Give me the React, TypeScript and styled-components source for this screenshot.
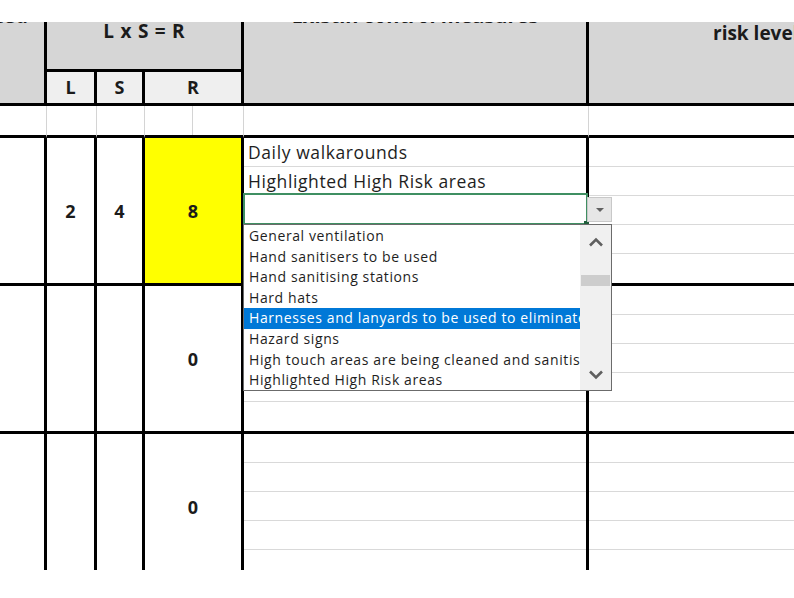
import React from "react";
import styled, { createGlobalStyle } from "styled-components";

const GlobalStyle = createGlobalStyle`
  html, body {
    margin: 0;
    padding: 0;
    background: #ffffff;
    overflow: hidden;
  }
  body {
    width: 794px;
    height: 598px;
    font-family: "Open Sans", "Noto Sans", sans-serif;
  }
`;

const Page = styled.div`
  width: 794px;
  height: 598px;
  padding-top: 22px;
  box-sizing: border-box;
  background: #ffffff;
`;

const Sheet = styled.div`
  display: grid;
  grid-template-columns: 47px 50px 48px 99px 345px 205px;
  grid-template-rows: 50px 34px 32px 148px 148px 148px;
  height: 548px;
  overflow: hidden;
  color: #1b1b1b;
`;

const HeadCell = styled.div<{ $light?: boolean; $rows?: number; $cols?: number; $last?: boolean }>`
  grid-row: span ${({ $rows }) => $rows || 1};
  grid-column: span ${({ $cols }) => $cols || 1};
  background: ${({ $light }) => ($light ? "#efefef" : "#d6d6d6")};
  border-right: ${({ $last }) => ($last ? "none" : "3px solid #000")};
  border-bottom: 3px solid #000;
  box-sizing: border-box;
  overflow: hidden;
  display: flex;
  justify-content: center;
  align-items: ${({ $light }) => ($light ? "center" : "flex-start")};
  font-size: ${({ $light }) => ($light ? 18 : 19)}px;
  line-height: 19px;
  font-weight: 700;
  white-space: nowrap;
`;

const Formula = styled(HeadCell)`
  word-spacing: 1.5px;
`;

/* header text whose upper part is hidden above the sheet's top edge */
const CutText = styled.span`
  margin-top: -16px;
  font-size: 20px;
  line-height: 20px;
`;

const SideHead = styled(HeadCell)`
  justify-content: flex-end;
  padding-right: 16px;
`;

const RiskHead = styled(HeadCell)`
  justify-content: flex-start;
  padding: 2px 0 0 124px;
`;

const EmptyCell = styled.div<{ $last?: boolean }>`
  border-right: ${({ $last }) => ($last ? "none" : "1px solid #d4d4d4")};
  border-bottom: 3px solid #000;
  box-sizing: border-box;
`;

const EmptySplit = styled(EmptyCell)`
  display: grid;
  grid-template-columns: 48px 1fr;
`;

const EmptyHalf = styled.div`
  border-right: 1px solid #d4d4d4;
`;

const MergedCell = styled.div<{ $fill?: string }>`
  background: ${({ $fill }) => $fill || "#ffffff"};
  border-right: 3px solid #000;
  border-bottom: 3px solid #000;
  box-sizing: border-box;
  display: flex;
  align-items: center;
  justify-content: center;
  font-size: 18px;
  line-height: 18px;
  font-weight: 700;
`;

const LinesCell = styled.div<{ $last?: boolean }>`
  position: relative;
  display: flex;
  flex-direction: column;
  border-right: ${({ $last }) => ($last ? "none" : "3px solid #000")};
  border-bottom: 3px solid #000;
  box-sizing: border-box;
`;

const Line = styled.div`
  height: 29px;
  flex: none;
  box-sizing: border-box;
  border-bottom: 1px solid #d9d9d9;
  padding-left: 4px;
  font-size: 17.5px;
  letter-spacing: 0.6px;
  line-height: 28px;
  color: #1e1e1e;
  white-space: nowrap;
  overflow: hidden;

  &:last-child {
    border-bottom: none;
  }
`;

const ActiveCell = styled.div`
  position: absolute;
  left: -1px;
  top: 55px;
  width: 345px;
  height: 32px;
  box-sizing: border-box;
  background: #ffffff;
  border: 2px solid #3f8f62;
  z-index: 2;
`;

const FillHandle = styled.div`
  position: absolute;
  left: 340px;
  top: 83px;
  width: 5px;
  height: 5px;
  background: #1f5e3b;
  z-index: 3;
`;

const DropButton = styled.div`
  position: absolute;
  left: 343px;
  top: 59px;
  width: 25px;
  height: 25px;
  box-sizing: border-box;
  background: #e6e6e6;
  border: 1px solid #c8c8c8;
  display: flex;
  align-items: center;
  justify-content: center;
  z-index: 3;
`;

const Caret = styled.span`
  width: 0;
  height: 0;
  border-left: 4px solid transparent;
  border-right: 4px solid transparent;
  border-top: 4px solid #606060;
  margin-top: 1px;
`;

const DropList = styled.div`
  position: absolute;
  left: -1px;
  top: 86px;
  width: 369px;
  height: 167px;
  box-sizing: border-box;
  background: #ffffff;
  border: 1px solid #6b6b6b;
  display: flex;
  z-index: 4;
`;

const Options = styled.div`
  flex: 1;
  min-width: 0;
  display: flex;
  flex-direction: column;
  padding-top: 1px;
  overflow: hidden;
`;

const Option = styled.div<{ $selected?: boolean }>`
  height: 20.6px;
  flex: none;
  line-height: 20.6px;
  padding-left: 5px;
  font-size: 14px;
  letter-spacing: 0.6px;
  color: ${({ $selected }) => ($selected ? "#ffffff" : "#1e1e1e")};
  background: ${({ $selected }) => ($selected ? "#0078d7" : "transparent")};
  white-space: nowrap;
  overflow: hidden;
`;

const Scrollbar = styled.div`
  width: 31px;
  flex: none;
  background: #f0f0f0;
  display: flex;
  flex-direction: column;
`;

const ArrowButton = styled.div<{ $h: number }>`
  height: ${({ $h }) => $h}px;
  flex: none;
  display: flex;
  align-items: center;
  justify-content: center;
`;

const Track = styled.div`
  flex: 1;
`;

const Thumb = styled.div`
  margin: 16px 1px 0 1px;
  height: 11px;
  background: #cdcdcd;
`;

const Chevron = ({ up }: { up?: boolean }) => (
  <svg width="16" height="10" viewBox="0 0 16 10">
    <polyline
      points={up ? "2,8.5 8,2.5 14,8.5" : "2,1.5 8,7.5 14,1.5"}
      fill="none"
      stroke="#5f5f5f"
      strokeWidth="2.6"
    />
  </svg>
);

const options = [
  "General ventilation",
  "Hand sanitisers to be used",
  "Hand sanitising stations",
  "Hard hats",
  "Harnesses and lanyards to be used to eliminate falls",
  "Hazard signs",
  "High touch areas are being cleaned and sanitised",
  "Highlighted High Risk areas",
];

type Row = { l: string; s: string; r: string; hot?: boolean; lines: string[]; open?: boolean };

const rows: Row[] = [
  { l: "2", s: "4", r: "8", hot: true, lines: ["Daily walkarounds", "Highlighted High Risk areas"], open: true },
  { l: "", s: "", r: "0", lines: [] },
  { l: "", s: "", r: "0", lines: [] },
];

function Dropdown() {
  return (
    <>
      <ActiveCell />
      <FillHandle />
      <DropButton>
        <Caret />
      </DropButton>
      <DropList>
        <Options>
          {options.map((o, i) => (
            <Option key={o} $selected={i === 4}>
              {o}
            </Option>
          ))}
        </Options>
        <Scrollbar>
          <ArrowButton $h={34}>
            <Chevron up />
          </ArrowButton>
          <Track>
            <Thumb />
          </Track>
          <ArrowButton $h={30}>
            <Chevron />
          </ArrowButton>
        </Scrollbar>
      </DropList>
    </>
  );
}

function Group({ row }: { row: Row }) {
  const lines = [0, 1, 2, 3, 4].map((i) => row.lines[i] || "");
  return (
    <>
      <MergedCell />
      <MergedCell>{row.l}</MergedCell>
      <MergedCell>{row.s}</MergedCell>
      <MergedCell $fill={row.hot ? "#ffff00" : undefined}>{row.r}</MergedCell>
      <LinesCell>
        {lines.map((t, i) => (
          <Line key={i}>{t}</Line>
        ))}
        {row.open && <Dropdown />}
      </LinesCell>
      <LinesCell $last>
        {lines.map((_, i) => (
          <Line key={i} />
        ))}
      </LinesCell>
    </>
  );
}

export default function App() {
  return (
    <Page>
      <GlobalStyle />
      <Sheet>
        <SideHead $rows={2}>
          <CutText>rated</CutText>
        </SideHead>
        <Formula $cols={3}>L x S = R</Formula>
        <HeadCell $rows={2}>
          <CutText>Existin control measures</CutText>
        </HeadCell>
        <RiskHead $rows={2} $last>
          risk level
        </RiskHead>
        <HeadCell $light>L</HeadCell>
        <HeadCell $light>S</HeadCell>
        <HeadCell $light>R</HeadCell>

        <EmptyCell />
        <EmptyCell />
        <EmptyCell />
        <EmptySplit>
          <EmptyHalf />
        </EmptySplit>
        <EmptyCell />
        <EmptyCell $last />

        {rows.map((r, i) => (
          <Group key={i} row={r} />
        ))}
      </Sheet>
    </Page>
  );
}
